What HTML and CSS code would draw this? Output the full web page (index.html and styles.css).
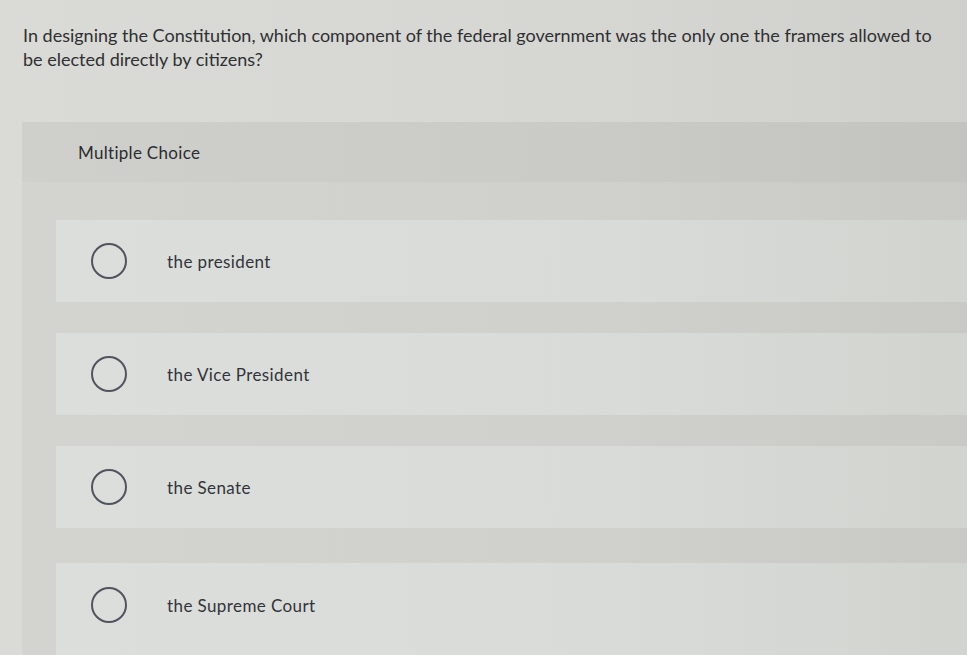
FILE: index.html
```html
<!DOCTYPE html>
<html lang="en">
<head>
<meta charset="utf-8">
<title>Multiple Choice</title>
<link rel="stylesheet" href="styles.css">
</head>
<body>
<div class="page">
  <p class="question">In designing the Constitution, which component of the federal government was the only one the framers allowed to be elected directly by citizens?</p>
  <section class="panel">
    <header class="panel-head">Multiple Choice</header>
    <div class="options">
      <label class="option"><span class="radio"></span><span class="label">the president</span></label>
      <label class="option"><span class="radio"></span><span class="label">the Vice President</span></label>
      <label class="option"><span class="radio"></span><span class="label">the Senate</span></label>
      <label class="option"><span class="radio"></span><span class="label">the Supreme Court</span></label>
    </div>
  </section>
</div>
</body>
</html>
```
FILE: styles.css
```css
html, body {
  margin: 0;
  padding: 0;
}
body {
  background: linear-gradient(90deg, #dadad6 0%, #d6d6d2 60%, #cfcfcb 100%);
  font-family: Lato, "Open Sans", sans-serif;
  color: #2f3033;
  width: 967px;
  height: 655px;
  overflow: hidden;
}
.page {
  padding: 23px 0 0 23px;
}
.question {
  margin: 0;
  width: 930px;
  font-size: 18px;
  line-height: 24px;
  letter-spacing: 0;
}
.panel {
  margin-top: 51px;
  margin-left: -1px;
  background: linear-gradient(90deg, #d3d4d0 0%, #d0d1cd 60%, #c9cac6 100%);
}
.panel-head {
  height: 60px;
  display: flex;
  align-items: center;
  padding-left: 56px;
  font-size: 17px;
  letter-spacing: 0.3px;
  color: #2c2d30;
  background: linear-gradient(90deg, #cfd0cc 0%, #cacbc7 60%, #c3c4c0 100%);
}
.options {
  display: flex;
  flex-direction: column;
  gap: 31px;
  padding: 38px 0 0 34px;
}
.option {
  height: 82px;
  width: 902px;
  display: flex;
  align-items: center;
  gap: 40px;
  padding-left: 35px;
  background: linear-gradient(90deg, #dcdedb 0%, #d9dbd8 60%, #d1d3cf 100%);
  font-size: 17px;
  letter-spacing: 0.4px;
  color: #33343a;
}
.option:last-child {
  margin-top: 4px;
  height: 84px;
  padding-bottom: 24px;
}
.radio {
  width: 32px;
  height: 32px;
  border: 2px solid #50545f;
  border-radius: 50%;
  flex: none;
}
```
